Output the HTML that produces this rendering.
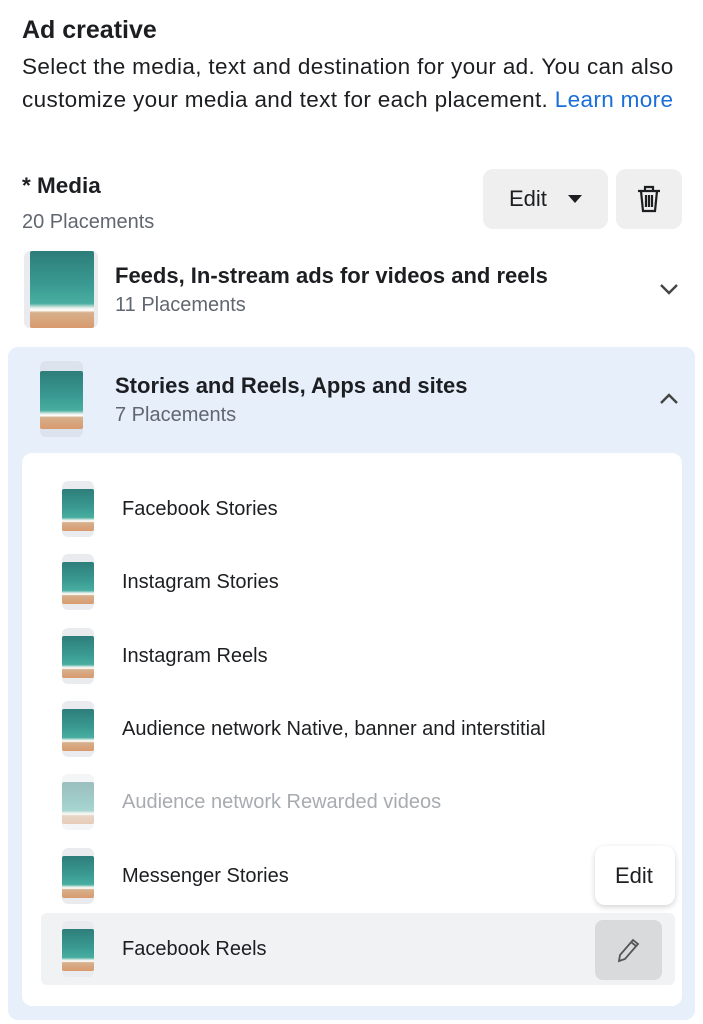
<!DOCTYPE html>
<html><head><style>
*{margin:0;padding:0;box-sizing:border-box}
body{width:703px;height:1024px;background:#fff;font-family:"Liberation Sans",Arial,sans-serif;color:#1c1e21;position:relative;overflow:hidden}
.a{position:absolute;white-space:nowrap}
.th{position:absolute;background:linear-gradient(180deg,#2e7d7a 0%,#3a9b93 45%,#48aea0 68%,#e8efe9 74%,#fff 77%,#d6b08c 80%,#d89a6e 100%);border-radius:2px}
.tw{position:absolute;background:#e9ebee;border-radius:6px}
.it{position:absolute;left:122px;font-size:20px;color:#1c1e21}
</style></head><body>
<div class="a" style="left:22px;top:16px;font-size:25px;font-weight:bold">Ad creative</div>
<div class="a" style="left:22px;top:50px;font-size:22.5px;line-height:33px;letter-spacing:0.35px">Select the media, text and destination for your ad. You can also<br>customize your media and text for each placement. <span style="color:#1a6ed8">Learn more</span></div>
<div class="a" style="left:22px;top:173px;font-size:22.5px;font-weight:bold">* Media</div>
<div class="a" style="left:22px;top:211px;font-size:20px;color:#606770">20 Placements</div>
<div class="a" style="left:483px;top:169px;width:125px;height:60px;background:#efefef;border-radius:10px"></div>
<div class="a" style="left:509px;top:186px;font-size:22px">Edit</div>
<svg class="a" style="left:567px;top:193px" width="16" height="12"><path d="M1 2h14L8 10z" fill="#1c1e21"/></svg>
<div class="a" style="left:616px;top:169px;width:66px;height:60px;background:#efefef;border-radius:10px"></div>
<svg class="a" style="left:636px;top:184px" width="26" height="30" viewBox="0 0 26 30" fill="none" stroke="#1c1e21" stroke-width="2.2"><path d="M2 7h22M9 7V3h8v4M5 7l2 20h12l2-20M10 11v12M13 11v12M16 11v12"/></svg>

<div class="tw" style="left:24px;top:251px;width:74px;height:77px"></div>
<div class="th" style="left:30px;top:251px;width:64px;height:77px"></div>
<div class="a" style="left:115px;top:263px;font-size:22px;font-weight:bold">Feeds, In-stream ads for videos and reels</div>
<div class="a" style="left:115px;top:294px;font-size:20px;color:#606770">11 Placements</div>
<svg class="a" style="left:659px;top:282px" width="20" height="14"><path d="M2 3l8 8 8-8" fill="none" stroke="#444" stroke-width="2.4"/></svg>

<div class="a" style="left:8px;top:347px;width:687px;height:673px;background:#e7effb;border-radius:10px"></div>
<div class="tw" style="left:40px;top:361px;width:43px;height:76px;background:#dde3ec"></div>
<div class="th" style="left:40px;top:371px;width:43px;height:58px"></div>
<div class="a" style="left:115px;top:373px;font-size:22px;font-weight:bold">Stories and Reels, Apps and sites</div>
<div class="a" style="left:115px;top:404px;font-size:20px;color:#606770">7 Placements</div>
<svg class="a" style="left:659px;top:392px" width="20" height="14"><path d="M2 11l8-8 8 8" fill="none" stroke="#444" stroke-width="2.4"/></svg>

<div class="a" style="left:22px;top:453px;width:660px;height:553px;background:#fff;border-radius:10px"></div>
<div class="a" style="left:41px;top:913px;width:634px;height:72px;background:#f1f2f4;border-radius:6px"></div>

<div class="tw" style="left:62px;top:481px;width:32px;height:56px"></div><div class="th" style="left:62px;top:489px;width:32px;height:42px"></div>
<div class="it" style="top:498px">Facebook Stories</div>
<div class="tw" style="left:62px;top:554px;width:32px;height:56px"></div><div class="th" style="left:62px;top:562px;width:32px;height:42px"></div>
<div class="it" style="top:571px">Instagram Stories</div>
<div class="tw" style="left:62px;top:628px;width:32px;height:56px"></div><div class="th" style="left:62px;top:636px;width:32px;height:42px"></div>
<div class="it" style="top:645px">Instagram Reels</div>
<div class="tw" style="left:62px;top:701px;width:32px;height:56px"></div><div class="th" style="left:62px;top:709px;width:32px;height:42px"></div>
<div class="it" style="top:718px">Audience network Native, banner and interstitial</div>
<div class="tw" style="left:62px;top:774px;width:32px;height:56px;opacity:.5"></div><div class="th" style="left:62px;top:782px;width:32px;height:42px;opacity:.45"></div>
<div class="it" style="top:791px;color:#a8abaf">Audience network Rewarded videos</div>
<div class="tw" style="left:62px;top:848px;width:32px;height:56px"></div><div class="th" style="left:62px;top:856px;width:32px;height:42px"></div>
<div class="it" style="top:865px">Messenger Stories</div>
<div class="tw" style="left:62px;top:921px;width:32px;height:56px"></div><div class="th" style="left:62px;top:929px;width:32px;height:42px"></div>
<div class="it" style="top:938px">Facebook Reels</div>

<div class="a" style="left:595px;top:846px;width:80px;height:59px;background:#fff;border-radius:10px;box-shadow:0 2px 6px rgba(0,0,0,.18)"></div>
<div class="a" style="left:615px;top:863px;font-size:22px">Edit</div>
<div class="a" style="left:595px;top:920px;width:67px;height:60px;background:#d9dadc;border-radius:8px"></div>
<svg class="a" style="left:616px;top:936px" width="26" height="28" viewBox="0 0 26 28" fill="none" stroke="#555" stroke-width="1.8"><path d="M3 25l1-6L17 4l5 4L9 23z M15 6l5 4"/></svg>
</body></html>
